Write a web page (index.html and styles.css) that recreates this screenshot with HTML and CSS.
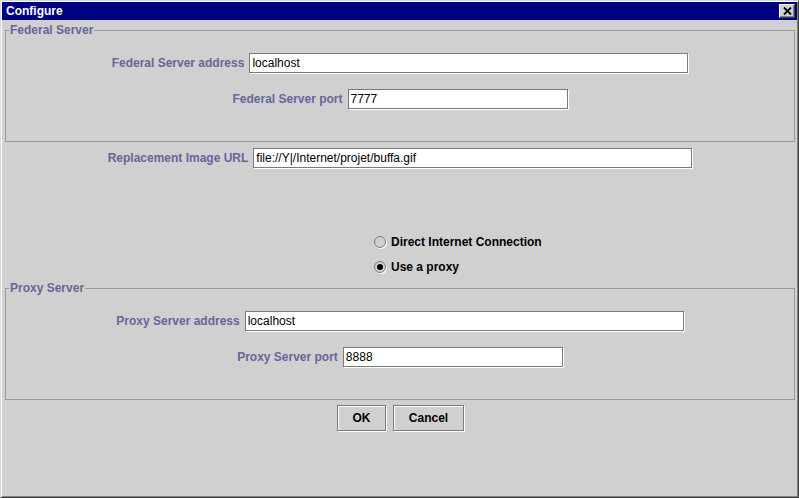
FILE: index.html
```html
<!DOCTYPE html>
<html lang="en">
<head>
    <meta charset="UTF-8">
    <meta name="viewport" content="width=device-width, initial-scale=1.0">
    <title>Configure</title>
    <link rel="stylesheet" href="styles.css">
</head>
<body>
    <div class="window">
        <div class="titlebar">
            <span class="title">Configure</span>
            <button class="close">
                <svg width="9" height="8" viewBox="0 0 9 8"><path d="M1 0.5 L8 7.5 M8 0.5 L1 7.5" stroke="#000" stroke-width="1.8"/></svg>
            </button>
        </div>
        <div class="content">
            <fieldset class="group">
                <legend>Federal Server</legend>
                <div class="row">
                    <label for="fed-address">Federal Server address</label>
                    <input type="text" id="fed-address" class="field wide" value="localhost">
                </div>
                <div class="row">
                    <label for="fed-port">Federal Server port</label>
                    <input type="text" id="fed-port" class="field narrow" value="7777">
                </div>
            </fieldset>

            <div class="row url-row">
                <label for="image-url">Replacement Image URL</label>
                <input type="text" id="image-url" class="field wide" value="file://Y|/Internet/projet/buffa.gif">
            </div>

            <div class="radios">
                <div class="radio"><span class="dot"></span>Direct Internet Connection</div>
                <div class="radio"><span class="dot checked"></span>Use a proxy</div>
            </div>

            <fieldset class="group">
                <legend>Proxy Server</legend>
                <div class="row">
                    <label for="proxy-address">Proxy Server address</label>
                    <input type="text" id="proxy-address" class="field wide" value="localhost">
                </div>
                <div class="row">
                    <label for="proxy-port">Proxy Server port</label>
                    <input type="text" id="proxy-port" class="field narrow" value="8888">
                </div>
            </fieldset>

            <div class="buttons">
                <button class="btn ok">OK</button>
                <button class="btn cancel">Cancel</button>
            </div>
        </div>
    </div>
</body>
</html>
```

FILE: styles.css
```css
* { box-sizing: border-box; }

body {
    margin: 0;
    font-family: "Liberation Sans", Arial, sans-serif;
    font-size: 12px;
}

.window {
    width: 799px;
    height: 498px;
    background-color: #d0d0d0;
    border-top: 1px solid #d8d8d8;
    border-left: 1px solid #d8d8d8;
    border-right: 1px solid #404040;
    border-bottom: 1px solid #404040;
    box-shadow: inset 1px 1px 0 #ffffff, inset -1px -1px 0 #808080;
    padding: 1px;
    display: flex;
    flex-direction: column;
}

.titlebar {
    height: 18px;
    background-color: #000080;
    display: flex;
    align-items: center;
    justify-content: space-between;
    padding: 0 2px 0 4px;
}
.title {
    color: #ffffff;
    font-weight: bold;
    font-size: 12px;
}
.close {
    width: 16px;
    height: 14px;
    padding: 0;
    background-color: #d0d0d0;
    border-top: 1px solid #ffffff;
    border-left: 1px solid #ffffff;
    border-right: 1px solid #404040;
    border-bottom: 1px solid #404040;
    box-shadow: inset -1px -1px 0 #808080;
    display: flex;
    align-items: center;
    justify-content: center;
}

.content {
    padding: 3px 2px 0 3px;
}

.group {
    margin: 0;
    padding: 15px 0 32px 0;
    border: 1px solid #999999;
    min-width: 0;
}
.group legend {
    color: #666699;
    font-weight: bold;
    padding: 0 1px;
    margin-left: 3px;
    line-height: 15px;
}

.row {
    display: flex;
    justify-content: center;
    align-items: center;
    gap: 5px;
}
.row + .row { margin-top: 16px; }
.row label {
    color: #666699;
    font-weight: bold;
}

.field {
    height: 20px;
    border: 1px solid #7a7a7a;
    box-shadow: 1px 1px 0 #ffffff;
    background-color: #ffffff;
    font-family: "Liberation Sans", Arial, sans-serif;
    font-size: 12px;
    color: #000000;
    padding: 0 2px;
    margin: 0;
    outline: none;
}
.wide { width: 439px; }
.narrow { width: 220px; }

.url-row { margin-top: 6px; }

.radios {
    margin: 64px 0 0 369px;
    display: flex;
    flex-direction: column;
    gap: 5px;
}
.radio {
    height: 20px;
    display: flex;
    align-items: center;
    gap: 5px;
    font-weight: bold;
    color: #000000;
}
.dot {
    width: 12px;
    height: 12px;
    border-radius: 50%;
    border: 1px solid #7a7a7a;
    box-shadow: 1px 1px 0 #ffffff;
    background-color: #d0d0d0;
    display: flex;
    align-items: center;
    justify-content: center;
}
.dot.checked::after {
    content: "";
    width: 6px;
    height: 6px;
    border-radius: 50%;
    background-color: #000000;
}

.radios + .group { margin-top: 4px; }

.buttons {
    display: flex;
    justify-content: center;
    gap: 7px;
    margin-top: 5px;
    padding-left: 1px;
}
.btn {
    height: 26px;
    margin: 0;
    background-color: #d0d0d0;
    border: 1px solid #7a7a7a;
    box-shadow: inset 1px 1px 0 #ffffff, 1px 1px 0 #ffffff;
    font-family: "Liberation Sans", Arial, sans-serif;
    font-size: 12px;
    font-weight: bold;
    color: #000000;
    padding: 0;
}
.ok { width: 49px; }
.cancel { width: 71px; }
```
